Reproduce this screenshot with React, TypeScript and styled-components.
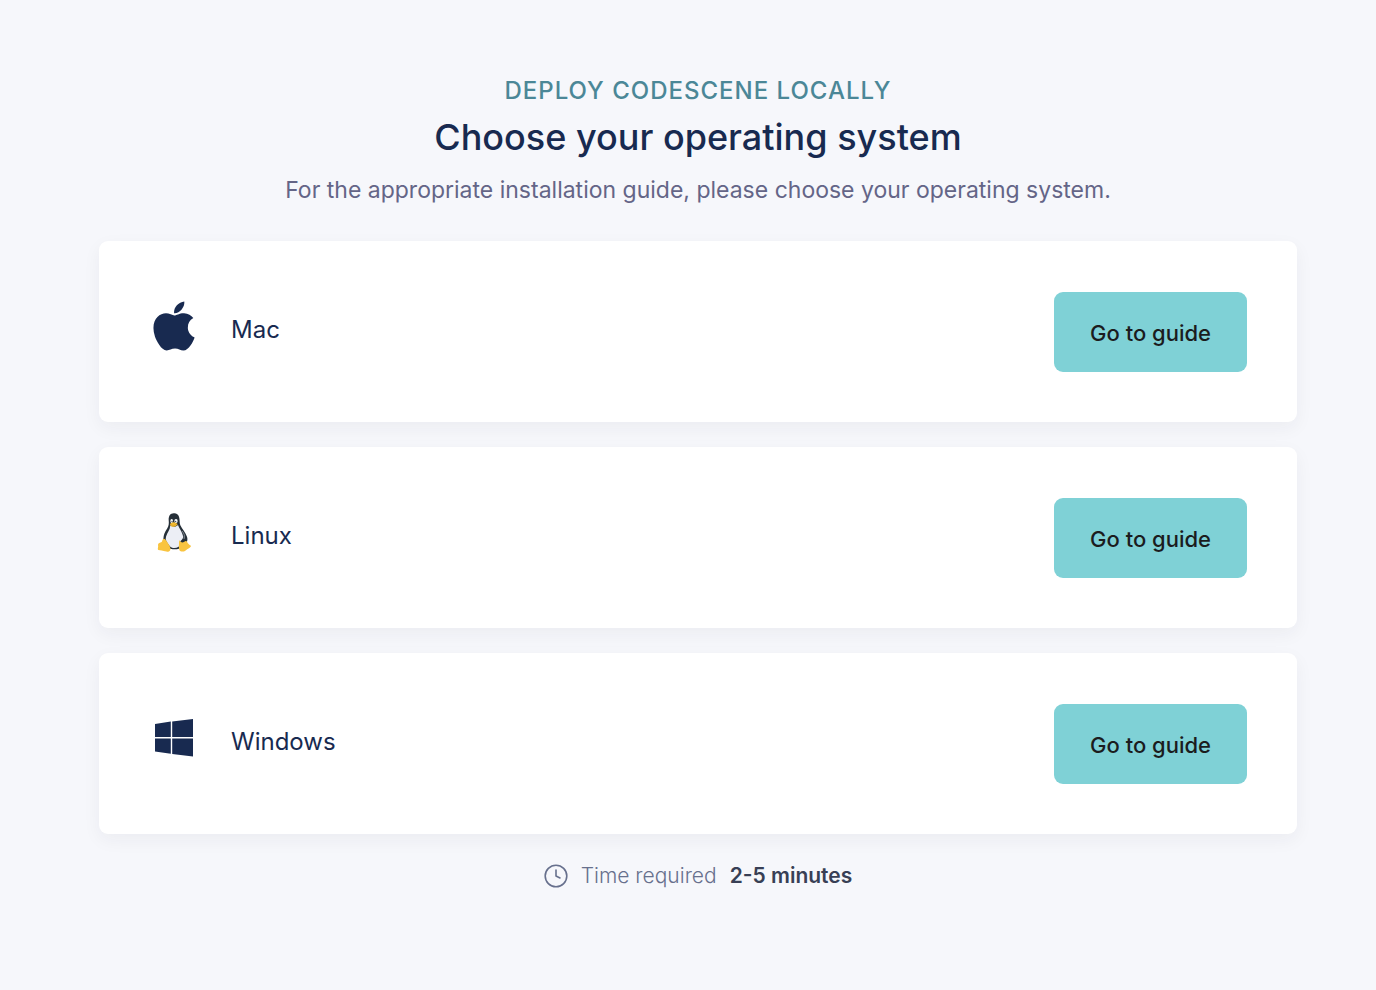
import React from "react";
import styled, { createGlobalStyle } from "styled-components";
import { FaApple } from "react-icons/fa";

const GlobalStyle = createGlobalStyle`
  * { box-sizing: border-box; }
  body {
    margin: 0;
    background: #f6f7fb;
    font-family: Inter, "Liberation Sans", sans-serif;
    color: #182a50;
  }
`;

const Page = styled.main`
  min-height: 100vh;
  padding: 76px 79px 76px 99px;
  background: #f6f7fb;
`;

const Header = styled.header`
  text-align: center;
  margin-bottom: 34px;
`;

const Eyebrow = styled.p`
  margin: 0;
  font-size: 24px;
  line-height: 30px;
  font-weight: 500;
  letter-spacing: 1px;
  text-transform: uppercase;
  color: #4b8797;
`;

const Title = styled.h1`
  margin: 6px 0 12px;
  font-size: 36px;
  line-height: 50px;
  font-weight: 500;
`;

const Lead = styled.p`
  margin: 0;
  font-size: 23px;
  line-height: 33px;
  color: #646587;
`;

const List = styled.ul`
  display: flex;
  flex-direction: column;
  gap: 25px;
  margin: 0;
  padding: 0;
  list-style: none;
`;

const Card = styled.li`
  display: flex;
  align-items: center;
  padding: 51px 50px 50px;
  border-radius: 9px;
  background: #fff;
  box-shadow: 0 6px 18px rgba(30, 35, 50, 0.05);
`;

const IconSlot = styled.span`
  display: flex;
  align-items: center;
  justify-content: center;
  width: 50px;
  padding-bottom: 12px;
`;

const Name = styled.span`
  flex: 1;
  margin-left: 32px;
  padding-bottom: 5px;
  font-size: 24px;
  line-height: 32px;
`;

const GuideButton = styled.button`
  height: 80px;
  padding: 2px 36px 0;
  border: 0;
  border-radius: 9px;
  background: #7fd1d6;
  color: #1b1c1e;
  font: inherit;
  font-size: 22px;
  font-weight: 500;
  cursor: pointer;
`;

const Footer = styled.footer`
  display: flex;
  align-items: center;
  justify-content: center;
  gap: 13px;
  margin-top: 27px;
  font-size: 21px;
  line-height: 30px;
  font-weight: 300;
  color: #67708d;

  strong {
    font-weight: 600;
    color: #383f55;
  }
`;

const AppleIcon = () => (
  <FaApple size={56} viewBox="0 0 384 512" color="#182a50" aria-hidden />
);

const WindowsIcon = () => (
  <svg width="38" height="38" viewBox="0 0 38 38" fill="#182a50" aria-hidden="true">
    <path d="M0 5 15.8 2.6V18H0ZM17.2 2.4 38 0V18H17.2ZM0 19.4H15.8V34.8L0 32.6ZM17.2 19.4H38V37.6L17.2 35Z" />
  </svg>
);

const TuxIcon = () => (
  <svg width="34" height="39" viewBox="52 37 102 117" aria-hidden="true">
    <path
      fill="#252f38"
      d="M104 38C92 37 87 46 87 57C88 68 88 74 83 83C75 95 72 102 71 115C68 121 76 137 92 144C105 148 120 146 126 139C140 132 146 120 142 108C138 96 127 85 122 74C119 67 121 57 118 48C116 42 111 38 104 38Z"
    />
    <path
      fill="#eceef5"
      d="M92 74C99 80 108 80 115 73C118 83 128 94 131 109C129 114 127 117 122 122C121 129 120 134 117 138C109 143 98 143 92 138C86 131 80 124 78 115C78 105 86 93 90 84Z"
    />
    <path fill="none" stroke="#a9b0b8" strokeWidth="2" d="M127 91C134 99 136 106 133 115" />
    <ellipse cx="96" cy="61" rx="4" ry="6" fill="#fff" />
    <ellipse cx="109" cy="61" rx="5" ry="6" fill="#fff" />
    <circle cx="97" cy="62" r="2" fill="#252f38" />
    <circle cx="108" cy="62" r="2" fill="#252f38" />
    <path fill="#f5bd32" d="M91 70C95 67 99 64 103 65C107 66 111 68 114 70C111 76 103 80 97 78C94 77 90 73 91 70Z" />
    <path fill="none" stroke="#c48c20" strokeWidth="1.5" d="M92 71C98 76 105 74 111 70" />
    <path
      fill="#f9c440"
      d="M71 115C75 113 79 119 83 125C87 132 94 140 92 147C90 154 83 154 76 152C69 150 62 149 56 148C52 145 57 139 55 134C54 127 61 127 66 124C68 121 68 117 71 115Z"
    />
    <path
      fill="#f9c440"
      d="M120 119C123 125 127 127 133 124C138 119 142 120 144 127C147 132 154 134 154 137C151 142 143 145 137 150C132 154 122 154 119 148C117 142 118 135 118 129C118 125 118 121 120 119Z"
    />
  </svg>
);

const ClockIcon = () => (
  <svg
    width="24"
    height="24"
    viewBox="0 0 24 24"
    fill="none"
    stroke="#67708d"
    strokeWidth="1.6"
    strokeLinecap="round"
    strokeLinejoin="round"
    aria-hidden="true"
  >
    <circle cx="12" cy="12" r="10.8" />
    <path d="M12 6V12L16 14" />
  </svg>
);

const systems = [
  { name: "Mac", Icon: AppleIcon },
  { name: "Linux", Icon: TuxIcon },
  { name: "Windows", Icon: WindowsIcon },
];

export default function App() {
  return (
    <Page>
      <GlobalStyle />
      <Header>
        <Eyebrow>Deploy CodeScene locally</Eyebrow>
        <Title>Choose your operating system</Title>
        <Lead>For the appropriate installation guide, please choose your operating system.</Lead>
      </Header>
      <List>
        {systems.map(({ name, Icon }) => (
          <Card key={name}>
            <IconSlot>
              <Icon />
            </IconSlot>
            <Name>{name}</Name>
            <GuideButton type="button">Go to guide</GuideButton>
          </Card>
        ))}
      </List>
      <Footer>
        <ClockIcon />
        <span>Time required</span>
        <strong>2-5 minutes</strong>
      </Footer>
    </Page>
  );
}
